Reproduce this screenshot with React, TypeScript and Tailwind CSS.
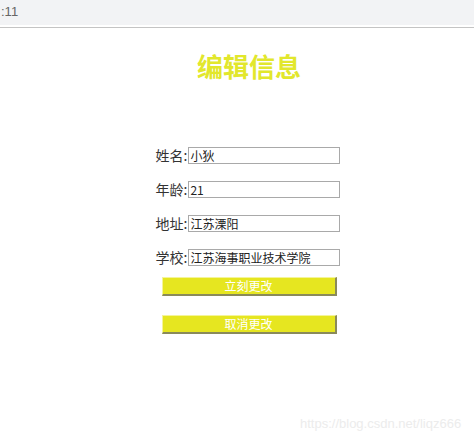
import React from "react";

const rows = [
  { label: "姓名:", value: "小狄" },
  { label: "年龄:", value: "21" },
  { label: "地址:", value: "江苏溧阳" },
  { label: "学校:", value: "江苏海事职业技术学院" },
];

export default function App() {
  return (
    <div
      className="relative w-[474px] h-[441px] bg-white overflow-hidden"
      style={{ fontFamily: '"Noto Sans CJK SC", "Noto Sans", sans-serif' }}
    >
      <div className="h-[25px] bg-[#f2f3f5] flex items-center">
        <span className="text-[13px] text-[#666] leading-none ml-[1px] mt-[-2px]" style={{ fontFamily: '"Liberation Sans", sans-serif' }}>
          :11
        </span>
      </div>
      <div className="h-[2px]" />
      <div className="h-[1px] bg-[#c4c4c4]" />

      <div className="pl-[24px] flex flex-col items-center">
        <h1 className="mt-[20px] text-[26px] leading-[36px] font-bold text-[#e2e72c]">编辑信息</h1>

        <div className="mt-[63px] flex flex-col gap-[18px] items-end pr-[2px]">
          {rows.map((r) => (
            <div key={r.label} className="flex items-center h-[16px]">
              <span className="text-[14px] text-[#333] leading-none mr-[1px]">{r.label}</span>
              <input
                readOnly
                value={r.value}
                className="w-[152px] h-[17px] border border-[#a9a9a9] px-[1px] text-[12px] text-[#222] leading-none outline-none"
              />
            </div>
          ))}
        </div>

        <div className="mt-[12px] flex flex-col gap-[19px]">
          <button className="w-[175px] h-[19px] bg-[#e6e620] text-white text-[12px] leading-none border-r-[2px] border-b-[2px] border-r-[#8a8a5a] border-b-[#8a8a5a] border-t border-l border-t-[#f4f49a] border-l-[#f4f49a]">
            立刻更改
          </button>
          <button className="w-[175px] h-[19px] bg-[#e6e620] text-white text-[12px] leading-none border-r-[2px] border-b-[2px] border-r-[#8a8a5a] border-b-[#8a8a5a] border-t border-l border-t-[#f4f49a] border-l-[#f4f49a]">
            取消更改
          </button>
        </div>
      </div>

      <div
        className="absolute left-[300px] top-[414px] text-[13px] text-[#ececec]"
        style={{ fontFamily: '"Liberation Sans", sans-serif' }}
      >
        https://blog.csdn.net/liqz666
      </div>
    </div>
  );
}
